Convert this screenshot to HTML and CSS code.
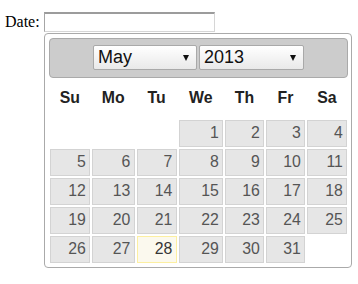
FILE: index.html
```html
<!DOCTYPE html>
<html lang="en">
<head>
    <meta charset="UTF-8">
    <title>Datepicker</title>
    <link rel="stylesheet" href="styles.css">
</head>
<body>
    <div class="field">
        <label for="dateInput">Date:</label>
        <input type="text" id="dateInput">
    </div>

    <div class="dp-popup">
        <div class="dp-header">
            <div class="dp-select month">May<span class="arrow"></span></div>
            <div class="dp-select year">2013<span class="arrow"></span></div>
        </div>
        <table class="dp-calendar">
            <colgroup>
                <col class="c-su"><col class="c-mo"><col class="c-tu"><col class="c-we">
                <col class="c-th"><col class="c-fr"><col class="c-sa">
            </colgroup>
            <thead>
                <tr><th>Su</th><th>Mo</th><th>Tu</th><th>We</th><th>Th</th><th>Fr</th><th>Sa</th></tr>
            </thead>
            <tbody>
                <tr><td></td><td></td><td></td><td><a href="#">1</a></td><td><a href="#">2</a></td><td><a href="#">3</a></td><td><a href="#">4</a></td></tr>
                <tr><td><a href="#">5</a></td><td><a href="#">6</a></td><td><a href="#">7</a></td><td><a href="#">8</a></td><td><a href="#">9</a></td><td><a href="#">10</a></td><td><a href="#">11</a></td></tr>
                <tr><td><a href="#">12</a></td><td><a href="#">13</a></td><td><a href="#">14</a></td><td><a href="#">15</a></td><td><a href="#">16</a></td><td><a href="#">17</a></td><td><a href="#">18</a></td></tr>
                <tr><td><a href="#">19</a></td><td><a href="#">20</a></td><td><a href="#">21</a></td><td><a href="#">22</a></td><td><a href="#">23</a></td><td><a href="#">24</a></td><td><a href="#">25</a></td></tr>
                <tr><td><a href="#">26</a></td><td><a href="#">27</a></td><td><a href="#" class="today">28</a></td><td><a href="#">29</a></td><td><a href="#">30</a></td><td><a href="#">31</a></td><td></td></tr>
            </tbody>
        </table>
    </div>
</body>
</html>
```

FILE: styles.css
```css
body {
    margin: 0;
    padding: 12px 0 0 5px;
    font-family: "Liberation Serif", "Times New Roman", serif;
    font-size: 16px;
    color: #000;
    background: #fff;
}
.field {
    display: flex;
    align-items: center;
    gap: 4px;
    height: 20px;
}
.field input {
    box-sizing: border-box;
    width: 171px;
    height: 20px;
    margin: 0;
    padding: 1px 2px;
    border: 1px solid #d6d6d6;
    border-top: 2px solid #9c9c9c;
    border-left: 1px solid #a6a6a6;
    background: #fff;
    outline: none;
}

/* popup calendar */
.dp-popup {
    box-sizing: border-box;
    width: 308px;
    margin: 1px 0 0 39px;
    padding: 3.5px;
    border: 1px solid #aaaaaa;
    border-radius: 4px;
    background: #ffffff;
    color: #222222;
    font-family: "Liberation Sans", Arial, sans-serif;
    font-size: 17.6px;
}
.dp-header {
    box-sizing: border-box;
    height: 40px;
    display: flex;
    align-items: center;
    justify-content: center;
    gap: 2px;
    padding-left: 1px;
    border: 1px solid #aaaaaa;
    border-radius: 4px;
    background: #cccccc;
}
.dp-select {
    position: relative;
    box-sizing: border-box;
    height: 25px;
    line-height: 23px;
    padding-left: 4px;
    border: 1px solid #a9a9a9;
    border-radius: 2px;
    background: linear-gradient(#ffffff, #e9e9e9);
    color: #111;
    font-size: 18px;
}
.dp-select.month {
    width: 104px;
}
.dp-select.year {
    width: 105px;
}
.dp-select .arrow {
    position: absolute;
    right: 7px;
    top: 9px;
    width: 0;
    height: 0;
    border-left: 3.5px solid transparent;
    border-right: 3.5px solid transparent;
    border-top: 6px solid #111;
}

.dp-calendar {
    width: 100%;
    table-layout: fixed;
    border-collapse: collapse;
    font-size: 15.84px;
    margin: 0;
}
.c-su { width: 42.5px; }
.c-mo { width: 44.5px; }
.c-tu { width: 42px; }
.c-we { width: 46.5px; }
.c-th { width: 41px; }
.c-fr { width: 41px; }
.c-sa { width: 42px; }
.dp-calendar th {
    padding: 11px 0 12px;
    text-align: center;
    font-weight: bold;
    line-height: 18px;
    border: 0;
}
.dp-calendar td {
    padding: 1px;
    border: 0;
}
.dp-calendar td a {
    display: block;
    padding: 3.5px 3.2px;
    line-height: 18px;
    text-align: right;
    text-decoration: none;
    border: 1px solid #d3d3d3;
    background: #e6e6e6;
    color: #555555;
}
.dp-calendar td a.today {
    border-color: #fcefa1;
    background: #fbf9ee;
    color: #363636;
}
```
